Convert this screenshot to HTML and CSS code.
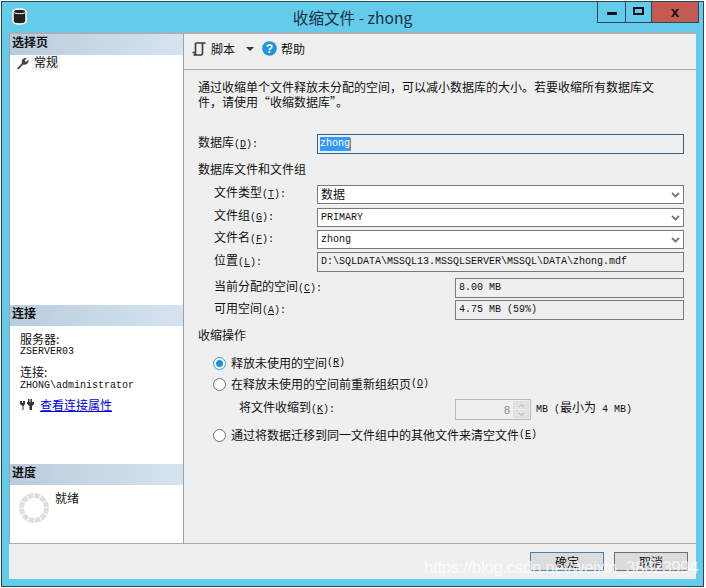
FILE: index.html
```
<!DOCTYPE html>
<html lang="zh">
<head>
<meta charset="utf-8">
<title>收缩文件 - zhong</title>
<link rel="stylesheet" href="styles.css">
</head>
<body>
<div class="window">
  <header class="titlebar">
    <svg class="db-icon" width="15" height="17" viewBox="0 0 15 17"><path d="M1 4c0-2 3-3 6.500-3S14 2 14 4v9c0 2-3 3-6.500 3S1 15 1 13z" fill="#222" stroke="#fff" stroke-width="1.500"/><path d="M2 4.500c1 1.500 10 1.500 11 0" fill="none" stroke="#fff"/></svg>
    <div class="title">收缩文件 - zhong</div>
    <div class="controls">
      <div class="ctl ctl-min"><i></i></div>
      <div class="ctl ctl-max"><i></i></div>
      <div class="ctl ctl-close">x</div>
    </div>
  </header>
  <div class="client">
    <div class="upper">
      <aside class="sidebar">
        <section class="side-a">
          <h2 class="side-head">选择页</h2>
          <div class="page-item">
            <svg width="13" height="13" viewBox="0 0 13 13"><path d="M1 11.500l5-5.500c-1-3 1-5.500 5-5L8.500 3.500 10 5l2.500-2.500c.5 3.500-2 6-5.500 5l-4.500 5z" fill="#444"/></svg>
            <span class="page-name">常规</span>
          </div>
        </section>
        <section class="side-b">
          <h2 class="side-head">连接</h2>
          <div class="conn">
            <div class="k">服务器:</div>
            <div class="v"><span class="lat">ZSERVER03</span></div>
            <div class="k k2">连接:</div>
            <div class="v v2"><span class="lat">ZHONG\administrator</span></div>
            <div class="link-row">
              <svg width="14" height="12" viewBox="0 0 14 12"><path d="M0 2l2 0v2h1V2h2v3L3.500 7v4h-1V7L0 5zM8 0h1.500v3h1V0H12v3h2v2l-2 2v4h-2.500V7L7 5V3h1z" fill="#333"/></svg>
              <a class="link" href="#">查看连接属性</a>
            </div>
          </div>
        </section>
        <section class="side-c">
          <h2 class="side-head">进度</h2>
          <div class="progress">
            <svg width="32" height="32" viewBox="0 0 32 32"><circle cx="16" cy="16" r="12.500" fill="none" stroke="#dedede" stroke-width="5" stroke-dasharray="5.500 1.040"/></svg>
            <span class="progress-text">就绪</span>
          </div>
        </section>
      </aside>
      <main class="pane">
        <div class="toolbar">
          <svg class="tb-script" width="14" height="14" viewBox="0 0 14 14"><path d="M3.500 1h10M3.500 1v10.500c0 1-1 1.500-2 1.500h7.500c1 0 1.500-.7 1.500-1.500V1M.5 10.500h3M6 13h3" fill="none" stroke="#3a3a3a" stroke-width="1.600"/></svg>
          <span class="tb-label">脚本</span>
          <span class="caret"></span>
          <svg class="tb-help" width="15" height="15" viewBox="0 0 15 15"><circle cx="7.500" cy="7.500" r="7.300" fill="#1e96dc"/><text x="7.500" y="12" text-anchor="middle" class="help-q">?</text></svg>
          <span class="tb-label tb-help-label">帮助</span>
        </div>
        <div class="form">
          <p class="desc">通过收缩单个文件释放未分配的空间，可以减小数据库的大小。若要收缩所有数据库文件，请使用“收缩数据库”。</p>
          <div class="row row-db">
            <label class="lbl-db">数据库<span class="lat">(<u>D</u>):</span></label>
            <div class="field field-db"><span class="sel lat">zhong</span><span class="caret-bar"></span></div>
          </div>
          <div class="heading h-files">数据库文件和文件组</div>
          <div class="group">
            <div class="row r1"><label class="lbl">文件类型<span class="lat">(<u>T</u>):</span></label><div class="field combo"><span class="cjk-val">数据</span><svg class="chev" width="9" height="6" viewBox="0 0 9 6"><path d="M1 1l3.500 3.500L8 1" fill="none" stroke="#777" stroke-width="1.800"/></svg></div></div>
            <div class="row r2"><label class="lbl">文件组<span class="lat">(<u>G</u>):</span></label><div class="field combo"><span class="lat">PRIMARY</span><svg class="chev" width="9" height="6" viewBox="0 0 9 6"><path d="M1 1l3.500 3.500L8 1" fill="none" stroke="#777" stroke-width="1.800"/></svg></div></div>
            <div class="row r3"><label class="lbl">文件名<span class="lat">(<u>F</u>):</span></label><div class="field combo"><span class="lat">zhong</span><svg class="chev" width="9" height="6" viewBox="0 0 9 6"><path d="M1 1l3.500 3.500L8 1" fill="none" stroke="#777" stroke-width="1.800"/></svg></div></div>
            <div class="row r4"><label class="lbl">位置<span class="lat">(<u>L</u>):</span></label><div class="field ro"><span class="lat">D:\SQLDATA\MSSQL13.MSSQLSERVER\MSSQL\DATA\zhong.mdf</span></div></div>
            <div class="row r5"><label class="lbl lbl-wide">当前分配的空间<span class="lat">(<u>C</u>):</span></label><div class="field ro short"><span class="lat">8.00 MB</span></div></div>
            <div class="row r6"><label class="lbl lbl-wide">可用空间<span class="lat">(<u>A</u>):</span></label><div class="field ro short"><span class="lat">4.75 MB (59%)</span></div></div>
          </div>
          <div class="heading h-ops">收缩操作</div>
          <div class="ops">
            <div class="radio-row rr1"><span class="radio on"></span>释放未使用的空间<span class="lat">(<u>R</u>)</span></div>
            <div class="radio-row rr2"><span class="radio"></span>在释放未使用的空间前重新组织页<span class="lat">(<u>O</u>)</span></div>
            <div class="spin-row">
              <label class="spin-lbl">将文件收缩到<span class="lat">(<u>K</u>):</span></label>
              <div class="spin"><span class="spin-val">8</span><div class="spin-btns"><span class="sb"><svg width="7" height="5" viewBox="0 0 7 5"><path d="M1 4l2.500-2.500L6 4" fill="none" stroke="#aaa"/></svg></span><span class="sb"><svg width="7" height="5" viewBox="0 0 7 5"><path d="M1 1l2.500 2.500L6 1" fill="none" stroke="#aaa"/></svg></span></div></div>
              <span class="spin-note"><span class="lat">MB (</span>最小为<span class="lat"> 4 MB)</span></span>
            </div>
            <div class="radio-row rr3"><span class="radio"></span>通过将数据迁移到同一文件组中的其他文件来清空文件<span class="lat">(<u>E</u>)</span></div>
          </div>
        </div>
      </main>
    </div>
    <footer class="footer">
      <button class="btn btn-ok">确定</button>
      <button class="btn">取消</button>
    </footer>
  </div>
  <div class="watermark">https://blog.csdn.net/weixin_38623994</div>
</div>
</body>
</html>
```
FILE: styles.css
```
* { box-sizing: border-box; }
html, body { margin: 0; padding: 0; }
body {
  width: 706px; height: 588px; background: #fff; overflow: hidden;
  font: 12px/14px "Noto Sans CJK SC", "Liberation Sans", sans-serif; color: #111;
}
.lat { font-family: "Liberation Mono", monospace; font-size: 10px; }
.window {
  position: relative; margin: 1px 0 0 1px; width: 703px; height: 586px;
  border: 1px solid #2d4656; background: #65cbeb;
  padding: 0 7px 7px 7px; display: flex; flex-direction: column;
}
.titlebar { height: 30px; position: relative; display: flex; align-items: flex-start; flex: none; }
.db-icon { margin: 6px 0 0 3px; }
.title {
  position: absolute; left: 0; right: 0; top: 4px; text-align: center;
  font: 15.600px/22px "Noto Sans CJK SC", "Noto Sans", sans-serif; color: #16323f;
}
.controls { position: absolute; right: -3px; top: 0; display: flex; height: 21px; border: 1px solid #2d4656; border-top: 0; }
.ctl { display: flex; align-items: center; justify-content: center; height: 100%; }
.ctl-min { width: 28px; border-right: 1px solid #2d4656; }
.ctl-min i { width: 10px; height: 3px; background: #111; margin-top: 3px; }
.ctl-max { width: 26px; border-right: 1px solid #2d4656; }
.ctl-max i { width: 11px; height: 8px; border: 2px solid #111; margin-bottom: 2px; }
.ctl-close { width: 46px; background: #c45b50; font: bold 15px/16px "Liberation Sans", sans-serif; color: #111; }
.client { flex: 1; display: flex; flex-direction: column; background: #efefef; border-top: 2px solid #a6b0b8; min-height: 0; }
.upper { flex: 1; display: flex; min-height: 0; }
.sidebar { width: 175px; flex: none; background: #fff; border-right: 1px solid #a0a0a0; border-left: 1px solid #a0a0a0; display: flex; flex-direction: column; }
.side-head {
  margin: 0; height: 21px; padding-left: 2px; font-size: 12px; line-height: 15px; font-weight: 700; color: #111;
  background: linear-gradient(90deg, #b9cbdc, #d6e4f0);
}
.side-a { height: 271px; }
.side-b { height: 159px; }
.side-c { flex: 1; }
.page-item { display: flex; align-items: center; gap: 3px; padding-left: 6px; }
.page-name { background: #f2f2f2; padding: 1px 2px 3px; line-height: 12px; width: 28px; }
.conn { padding: 7px 0 0 10px; }
.k { height: 12px; line-height: 12px; }
.v { height: 12px; line-height: 12px; margin-top: -2px; }
.v2 { margin-top: -1px; }
.k2 { margin-top: 11px; }
.link-row { display: flex; gap: 6px; align-items: center; margin-top: 9px; }
.link { color: #0000e6; text-decoration: underline; }
.progress { display: flex; align-items: flex-start; gap: 5px; padding: 7px 0 0 8px; }
.progress-text { margin-top: -1px; }
.pane { flex: 1; display: flex; flex-direction: column; min-width: 0; }
.toolbar { height: 36px; flex: none; border-bottom: 1px solid #a8adb3; display: flex; align-items: center; padding-left: 8px; padding-bottom: 6px; }
.tb-label { margin-left: 5px; }
.tb-help-label { margin-left: 4px; }
.caret { width: 0; height: 0; border: 4px solid transparent; border-top: 4px solid #333; border-bottom: 0; margin: 0 8px 0 11px; }
.help-q { font: bold 12px "Liberation Sans", sans-serif; fill: #fff; }
.form { flex: 1; padding: 10px 12px 0 14px; }
.desc { margin: 0; width: 470px; line-height: 14.500px; height: 29px; }
.row { display: flex; align-items: center; }
.row-db { margin-top: 25px; height: 20px; }
.lbl-db { width: 119px; padding-bottom: 2px; }
.field { flex: 1; height: 100%; border: 1px solid #7a7a7a; padding-left: 3px; display: flex; align-items: center; background: #fff; position: relative; white-space: nowrap; }
.field-db { background: #efefef; border-color: #31648c; padding-left: 2px; }
.sel { background: #3399ff; color: #fff; }
.caret-bar { width: 1px; height: 13px; background: #d0701e; }
.cjk-val { padding-bottom: 2px; }
.heading { height: 14px; }
.h-files { margin-top: 8px; }
.group { padding-left: 16px; margin-top: 9px; }
.lbl { width: 103px; flex: none; padding-bottom: 2px; }
.lbl-wide { width: 241px; }
.r1, .r2, .r3 { height: 19px; }
.r2 { margin-top: 4px; }
.r3 { margin-top: 3px; }
.r4 { height: 20px; margin-top: 3px; }
.r5 { height: 20px; margin-top: 6px; }
.r6 { height: 20px; margin-top: 2px; }
.ro { background: #efefef; }
.chev { position: absolute; right: 3px; top: 6px; }
.h-ops { margin-top: 8px; }
.ops { margin-top: 14px; padding-left: 15px; }
.radio-row { display: flex; align-items: center; height: 14px; white-space: pre; }
.rr2 { margin-top: 7px; }
.rr3 { margin-top: 8px; }
.radio { width: 13px; height: 13px; border-radius: 50%; border: 1px solid #707070; background: #fff; margin-right: 5px; flex: none; display: flex; align-items: center; justify-content: center; }
.radio.on { border-color: #3a9be0; }
.radio.on::after { content: ""; width: 7px; height: 7px; border-radius: 50%; background: #1e8fe0; }
.spin-row { display: flex; align-items: center; height: 21px; margin-top: 8px; }
.spin-lbl { width: 242px; padding: 0 0 2px 26px; flex: none; white-space: nowrap; }
.spin { width: 76px; height: 100%; border: 1px solid #bbb; background: #efefef; display: flex; justify-content: flex-end; padding: 1px; flex: none; }
.spin-val { color: #888; font: 11px/18px "Liberation Sans", sans-serif; margin-right: 3px; }
.spin-btns { width: 16px; display: flex; flex-direction: column; gap: 1px; }
.sb { flex: 1; background: #e2e2e2; display: flex; align-items: center; justify-content: center; border: 1px solid #ddd; }
.spin-note { margin-left: 5px; white-space: pre; padding-bottom: 2px; }
.footer { height: 36px; flex: none; background: #efefef; border-top: 1px solid #a8a8a8; display: flex; justify-content: flex-end; gap: 10px; padding: 8px 8px 0 0; }
.btn { width: 74px; height: 19px; border: 1px solid #707070; background: #dcdcdc; font: inherit; color: #111; padding: 0; line-height: 15px; }
.btn-ok { border: 1px solid #3a86c0; }
.watermark { position: absolute; left: 422px; top: 554px; font: 17px/24px "Liberation Sans", sans-serif; letter-spacing: -.4px; color: rgba(255,255,255,.72); white-space: nowrap; pointer-events: none; }
```
